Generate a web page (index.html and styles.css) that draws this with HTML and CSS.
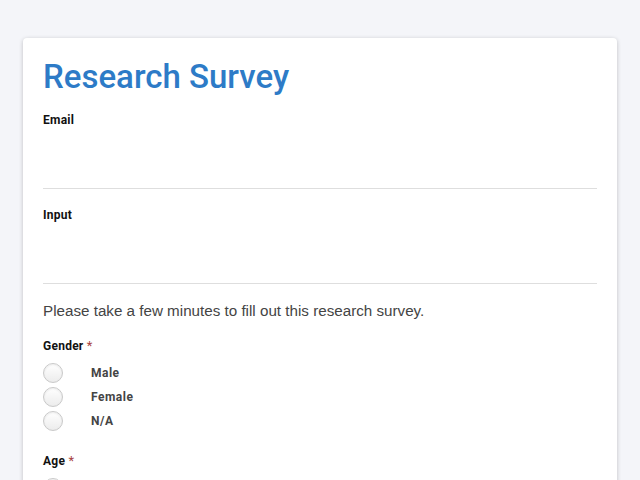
FILE: index.html
```html
<!DOCTYPE html>
<html>
<head>
<meta charset="utf-8">
<link rel="stylesheet" href="styles.css">
</head>
<body>
<div class="card">
  <h1 class="title">Research Survey</h1>
  <div class="field">
    <div class="label">Email</div>
    <div class="input"></div>
  </div>
  <div class="field">
    <div class="label">Input</div>
    <div class="input"></div>
  </div>
  <p class="desc">Please take a few minutes to fill out this research survey.</p>
  <div class="group">
    <div class="label">Gender <span class="req">*</span></div>
    <div class="options">
      <div class="option"><span class="radio"></span><span class="opt-text">Male</span></div>
      <div class="option"><span class="radio"></span><span class="opt-text">Female</span></div>
      <div class="option"><span class="radio"></span><span class="opt-text">N/A</span></div>
    </div>
  </div>
  <div class="group">
    <div class="label">Age <span class="req">*</span></div>
    <div class="options">
      <div class="option"><span class="radio"></span><span class="opt-text">18-24</span></div>
      <div class="option"><span class="radio"></span><span class="opt-text">25-34</span></div>
    </div>
  </div>
</div>
</body>
</html>
```

FILE: styles.css
```css
html, body {
  margin: 0;
  padding: 0;
  background: #f4f5f9;
  overflow: hidden;
  height: 480px;
}
.card {
  margin: 38px 23px 0 23px;
  background: #fff;
  border-radius: 4px;
  box-shadow: 0 1px 4px rgba(0, 0, 0, 0.22);
  padding: 17px 20px 40px 20px;
}
.title {
  margin: 0 0 13px 0;
  font-family: Roboto, "Liberation Sans", sans-serif;
  font-weight: 500;
  font-size: 33px;
  line-height: 44px;
  color: #2d7bc7;
}
.label {
  font-family: Roboto, "Liberation Sans", sans-serif;
  font-weight: 700;
  font-size: 12px;
  line-height: 16px;
  letter-spacing: 0.25px;
  color: #111;
}
.req {
  color: #a94442;
  font-weight: 400;
  font-size: 13px;
  letter-spacing: 0;
}
.field {
  margin-bottom: 18px;
}
.field + .field {
  margin-bottom: 17px;
}
.input {
  height: 60px;
  border-bottom: 1px solid #dedede;
}
.desc {
  margin: 0 0 17px 0;
  font-family: "Liberation Sans", Arial, sans-serif;
  font-size: 15.2px;
  line-height: 20px;
  color: #444;
}
.options {
  margin-top: 7px;
  display: flex;
  flex-direction: column;
}
.group {
  margin-bottom: 20px;
}
.option {
  display: flex;
  align-items: center;
  height: 24px;
  gap: 28px;
}
.radio {
  box-sizing: border-box;
  width: 20px;
  height: 20px;
  border-radius: 50%;
  border: 1px solid #c9c9c9;
  background: linear-gradient(#ffffff, #ececec);
  box-shadow: inset 0 1px 2px rgba(0, 0, 0, 0.08);
}
.opt-text {
  font-family: Roboto, "Liberation Sans", sans-serif;
  font-weight: 700;
  font-size: 12px;
  line-height: 16px;
  letter-spacing: 0.5px;
  color: #444;
}
```
